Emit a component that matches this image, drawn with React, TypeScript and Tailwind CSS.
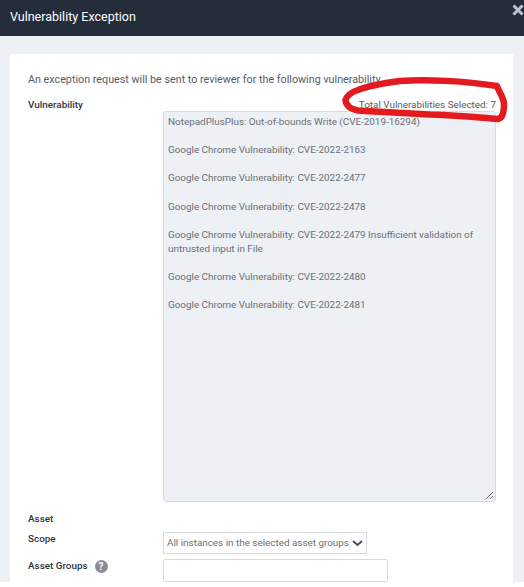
const lines = [
  "NotepadPlusPlus: Out-of-bounds Write (CVE-2019-16294)",
  "Google Chrome Vulnerability: CVE-2022-2163",
  "Google Chrome Vulnerability: CVE-2022-2477",
  "Google Chrome Vulnerability: CVE-2022-2478",
  "Google Chrome Vulnerability: CVE-2022-2479 Insufficient validation of untrusted input in File",
  "Google Chrome Vulnerability: CVE-2022-2480",
  "Google Chrome Vulnerability: CVE-2022-2481",
];

export default function App() {
  return (
    <div className="relative w-[524px] h-[587px] overflow-hidden bg-white font-['Roboto','Liberation_Sans',sans-serif]">
      <header className="h-[36px] bg-[#252c3a] flex items-center pl-[10px] pb-[1px] text-[12.5px] text-white">
        <span>Vulnerability Exception</span>
      </header>
      <button className="absolute right-0 top-[-1px] text-[#c0c4ca]" aria-label="Close">
        <svg width="14" height="14" viewBox="0 0 14 14" className="block mt-[5px]">
          <path d="M3.5 1.5 L12.5 10.5 M12.5 1.5 L3.5 10.5" stroke="currentColor" strokeWidth="3" fill="none" />
        </svg>
      </button>
      <div className="h-[546px] bg-[#edf0f5] px-[10px] pt-[18px]">
        <div className="h-[528px] w-[503px] bg-white pt-[19px] pl-[18px] pr-[17px] text-[9.9px] text-[#4d5560] overflow-hidden">
          <p className="leading-[14px] text-[10.75px] text-[#555c66]">An exception request will be sent to reviewer for the following vulnerability</p>
          <div className="flex justify-between mt-[11px] h-[14px] leading-[14px]">
            <span className="font-medium text-[#2f353f]">Vulnerability</span>
            <span className="text-[#555c66]">Total Vulnerabilities Selected: 7</span>
          </div>
          <div className="flex mt-[-1px]">
            <div className="w-[135px] shrink-0" />
            <div className="relative w-[333px] h-[391px] rounded-[3px] border border-[#d8dce2] bg-[#edf0f5] px-[4px] py-[3px] text-[#6a6f77]">
              {lines.map((l) => (
                <p key={l} className="leading-[14px] mb-[14.2px]">{l}</p>
              ))}
              <svg width="9" height="9" viewBox="0 0 9 9" className="absolute right-[1px] bottom-[1px]">
                <path d="M1 8 L8 1 M5 8 L8 5" stroke="#555" strokeWidth="0.8" fill="none" />
              </svg>
            </div>
          </div>
          <div className="font-medium text-[#2f353f] leading-[14px] mt-[10px]">Asset</div>
          <div className="flex mt-[6px]">
            <div className="w-[135px] shrink-0 font-medium text-[#2f353f] leading-[14px]">Scope</div>
            <div className="w-[204px] h-[22px] border border-[#d8dce2] flex items-center pl-[3px] pr-[3px] justify-between text-[#6a6f77] whitespace-nowrap">
              <span>All instances in the selected asset groups</span>
              <svg width="11" height="8" viewBox="0 0 11 8" className="shrink-0">
                <path d="M1 2 L5.5 6 L10 2" stroke="#4a4f57" strokeWidth="2" fill="none" />
              </svg>
            </div>
          </div>
          <div className="flex mt-[5px]">
            <div className="w-[135px] shrink-0 flex items-start gap-[7px] font-medium text-[#2f353f] leading-[14px]">
              <span>Asset Groups</span>
              <span className="w-[13px] h-[13px] mt-[1px] rounded-full bg-[#8a8d91] text-white text-[10px] leading-[13px] text-center font-bold">?</span>
            </div>
            <div className="w-[225px] h-[23px] border border-[#d8dce2] rounded-[2px] bg-white" />
          </div>
        </div>
      </div>
      <svg className="absolute left-0 top-0 pointer-events-none" width="524" height="587" viewBox="0 0 524 587" fill="none">
        <path d="M345.5 100 C 347 95, 352 92, 358 90 C 370 85, 385 83, 400 81 C 425 79, 465 81, 497 86 C 499 92, 504 98, 504 104 C 504 113, 502 119, 497 119 C 475 117, 450 115, 430 114.5 C 405 113, 380 112, 358 110.5 C 350 109, 346 105, 345.5 100 Z" stroke="#e31b1f" strokeWidth="6.5" strokeLinejoin="round" />
      </svg>
    </div>
  );
}
